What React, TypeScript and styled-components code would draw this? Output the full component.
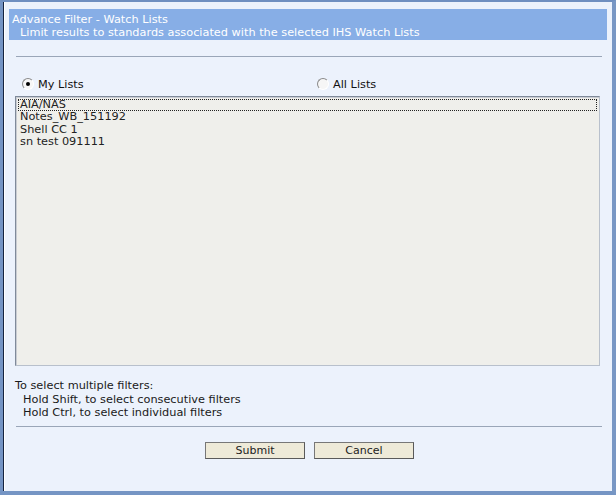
import React from "react";
import styled, { createGlobalStyle } from "styled-components";

const Global = createGlobalStyle`
  html, body { margin: 0; padding: 0; background: #ecf2fc; }
  * { box-sizing: border-box; }
`;

const Frame = styled.div`
  width: 616px;
  height: 495px;
  background: #ecf2fc;
  border-left: 4px solid #7494c4;
  border-top: 2px solid #6f8fc0;
  border-right: 4px solid #7997c4;
  border-bottom: 4px solid #7595c4;
  box-shadow: inset 1px 0 0 #ffffff;
  position: relative;
  font-family: "DejaVu Sans", sans-serif;
  font-size: 11.3px;
  color: #111;
  padding: 7px 5px 0 5px;
  display: flex;
  flex-direction: column;
  &::before {
    content: "";
    position: absolute;
    left: -1px;
    top: 0;
    bottom: 0;
    width: 1px;
    background: #15233f;
  }
`;

const Header = styled.div`
  background: #87aee6;
  color: #ffffff;
  height: 31px;
  padding: 4px 0 0 3px;
  line-height: 13px;
  font-size: 11.3px;
  display: flex;
  flex-direction: column;
`;

const SubTitle = styled.span`
  padding-left: 8px;
`;

const Rule = styled.div<{ $top: number }>`
  height: 1px;
  background: #9aa6b8;
  margin: ${(p) => p.$top}px 5px 0 7px;
`;

const RadioRow = styled.div`
  display: grid;
  grid-template-columns: 295px 1fr;
  margin-top: 20px;
  padding-left: 13px;
  height: 14px;
  align-items: center;
`;

const RadioLabel = styled.label`
  display: flex;
  align-items: center;
  gap: 4px;
  font-size: 11.3px;
  color: #111;
`;

const RadioDot = styled.span<{ $checked?: boolean }>`
  width: 12px;
  height: 12px;
  border-radius: 50%;
  position: relative;
  background: #f6f6f6;
  border: 1px solid;
  border-color: #8a8a8a #ffffff #ffffff #8a8a8a;
  &::after {
    content: "";
    display: ${(p) => (p.$checked ? "block" : "none")};
    position: absolute;
    left: 3px;
    top: 3px;
    width: 4px;
    height: 4px;
    border-radius: 50%;
    background: #000;
  }
`;

const ListBox = styled.div`
  margin: 5px 7px 0 6px;
  height: 270px;
  background: #efefeb;
  border: 1px solid;
  border-color: #7f8a9a #b8c0cc #b8c0cc #7f8a9a;
  box-shadow: inset 1px 1px 0 #c9ccd2;
  padding: 2px 2px 1px;
  display: flex;
  flex-direction: column;
`;

const ListItem = styled.div<{ $focused?: boolean }>`
  height: 12.3px;
  line-height: 12px;
  padding-left: 2px;
  font-size: 11.3px;
  color: #222;
  outline: ${(p) => (p.$focused ? "1px dotted #222" : "none")};
  outline-offset: -1px;
`;

const Help = styled.div`
  margin-top: 13px;
  padding-left: 6px;
  line-height: 13.5px;
  font-size: 11.3px;
  color: #1a1a1a;
  display: flex;
  flex-direction: column;
`;

const HelpLine = styled.span`
  padding-left: 8px;
`;

const Buttons = styled.div`
  display: flex;
  justify-content: center;
  gap: 9px;
  margin-top: 15px;
  padding-left: 3px;
`;

const Button = styled.button`
  width: 100px;
  height: 17px;
  padding: 0;
  background: #eeead8;
  border: 1px solid #5a5a5a;
  border-top-color: #777;
  border-left-color: #777;
  font-family: "DejaVu Sans", sans-serif;
  font-size: 11px;
  color: #222;
  line-height: 15px;
`;

const items = ["AIA/NAS", "Notes_WB_151192", "Shell CC 1", "sn test 091111"];

export default function App() {
  return (
    <>
      <Global />
      <Frame>
        <Header>
          <span>Advance Filter - Watch Lists</span>
          <SubTitle>Limit results to standards associated with the selected IHS Watch Lists</SubTitle>
        </Header>
        <Rule $top={16} />
        <RadioRow>
          <RadioLabel>
            <RadioDot $checked />
            My Lists
          </RadioLabel>
          <RadioLabel>
            <RadioDot />
            All Lists
          </RadioLabel>
        </RadioRow>
        <ListBox>
          {items.map((it, i) => (
            <ListItem key={it} $focused={i === 0}>
              {it}
            </ListItem>
          ))}
        </ListBox>
        <Help>
          <span>To select multiple filters:</span>
          <HelpLine>Hold Shift, to select consecutive filters</HelpLine>
          <HelpLine>Hold Ctrl, to select individual filters</HelpLine>
        </Help>
        <Rule $top={6} />
        <Buttons>
          <Button>Submit</Button>
          <Button>Cancel</Button>
        </Buttons>
      </Frame>
    </>
  );
}
